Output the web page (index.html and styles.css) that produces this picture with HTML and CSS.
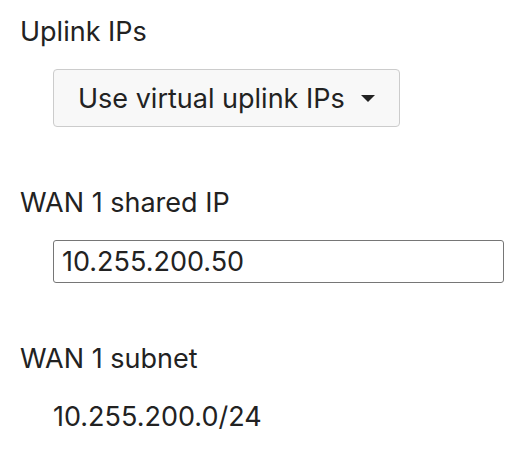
FILE: index.html
```html
<!DOCTYPE html>
<html lang="en">
<head>
    <meta charset="UTF-8">
    <meta name="viewport" content="width=device-width, initial-scale=1.0">
    <title>Uplink settings</title>
    <link rel="stylesheet" href="styles.css">
</head>
<body>
    <div class="container">
        <div class="field">
            <div class="field-label">Uplink IPs</div>
            <div class="field-control">
                <button class="dropdown">
                    Use virtual uplink IPs
                    <span class="caret"></span>
                </button>
            </div>
        </div>

        <div class="field">
            <label class="field-label" for="shared-ip">WAN 1 shared IP</label>
            <div class="field-control">
                <input type="text" id="shared-ip" value="10.255.200.50">
            </div>
        </div>

        <div class="field">
            <div class="field-label">WAN 1 subnet</div>
            <div class="field-control field-value">10.255.200.0/24</div>
        </div>
    </div>
</body>
</html>
```

FILE: styles.css
```css
body {
    font-family: Inter, "Noto Sans", sans-serif;
    margin: 0;
    background-color: #fff;
    color: #222;
}

.container {
    padding: 14px 20px 0 20px;
}

.field {
    margin-bottom: 58px;
}

.field:last-child {
    margin-bottom: 0;
}

.field-label {
    display: block;
    font-size: 27px;
    line-height: 36px;
}

.field-control {
    margin-left: 33px;
    margin-top: 19px;
}

.dropdown {
    display: inline-flex;
    align-items: center;
    gap: 16px;
    height: 58px;
    padding: 0 24px 0 24px;
    font-family: inherit;
    font-size: 27px;
    color: #222;
    background-color: #f8f8f8;
    border: 1px solid #ccc;
    border-radius: 4px;
}

.caret {
    width: 0;
    height: 0;
    border-left: 7px solid transparent;
    border-right: 7px solid transparent;
    border-top: 7px solid #222;
}

input[type="text"] {
    display: block;
    width: 451px;
    height: 43px;
    padding: 0 8px;
    font-family: inherit;
    font-size: 27px;
    color: #222;
    border: 1px solid #767676;
    border-radius: 3px;
    box-sizing: border-box;
    outline: none;
}

.field-value {
    margin-top: 22px;
    font-size: 27px;
    line-height: 36px;
}
```
